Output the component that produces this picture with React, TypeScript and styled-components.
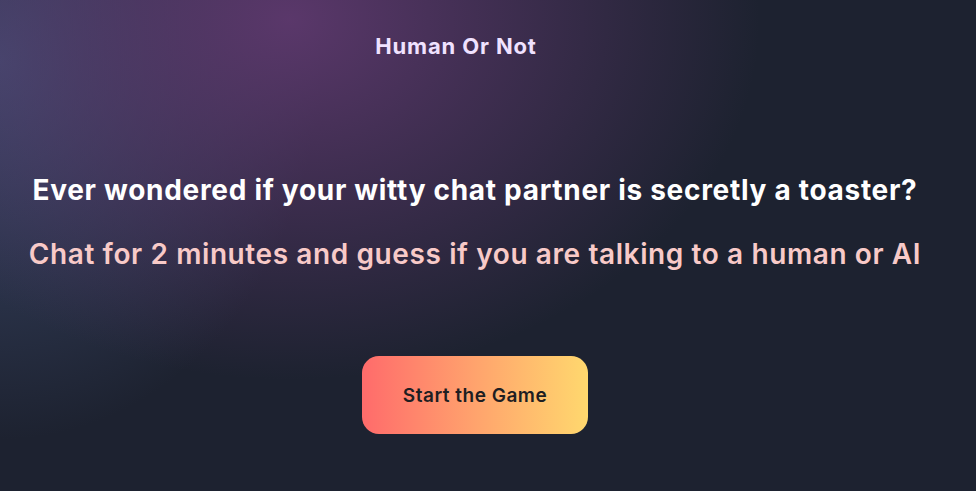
import React from "react";
import styled, { createGlobalStyle } from "styled-components";

const GlobalStyle = createGlobalStyle`
	html, body {
		margin: 0;
		padding: 0;
		height: 100%;
		background: #1d2230;
	}
	#root {
		min-height: 100%;
	}
`;

const Page = styled.main`
	box-sizing: border-box;
	min-height: 100vh;
	padding: 0 26px 0 0;
	font-family: Inter, "Open Sans", sans-serif;
	background:
		radial-gradient(ellipse 470px 360px at 290px 20px, rgba(92, 56, 108, 0.97), rgba(92, 56, 108, 0) 100%),
		radial-gradient(ellipse 320px 380px at 0px 60px, rgba(62, 76, 112, 0.95), rgba(62, 76, 112, 0) 100%),
		#1d2230;
	display: flex;
	flex-direction: column;
	align-items: center;
`;

const Header = styled.header`
	display: flex;
	justify-content: center;
	padding: 32px 38px 0 0;
`;

const Brand = styled.h1`
	margin: 0;
	font-size: 22px;
	font-weight: 700;
	letter-spacing: 0.85px;
	color: #f0e2ff;
	line-height: 28px;
`;

const Hero = styled.section`
	display: flex;
	flex-direction: column;
	align-items: center;
	padding-top: 112px;
	text-align: center;
`;

const Question = styled.h2<{ $tone?: "white" | "pink" }>`
	margin: 0;
	font-size: 28px;
	line-height: 36px;
	font-weight: ${(p) => (p.$tone === "pink" ? 600 : 700)};
	letter-spacing: ${(p) => (p.$tone === "pink" ? "0.6px" : "0.7px")};
	color: ${(p) => (p.$tone === "pink" ? "#f8cac8" : "#ffffff")};

	& + & {
		margin-top: 28px;
	}
`;

const StartButton = styled.button`
	margin-top: 84px;
	width: 226px;
	height: 78px;
	border: none;
	border-radius: 17px;
	background: linear-gradient(90deg, #ff6b6b 0%, #ffa36d 50%, #ffd86e 100%);
	color: #1e1e22;
	font-family: inherit;
	font-size: 19px;
	font-weight: 600;
	letter-spacing: 0.5px;
	cursor: pointer;
`;

export default function App() {
	return (
		<>
			<GlobalStyle />
			<Page>
				<Header>
					<Brand>Human Or Not</Brand>
				</Header>
				<Hero>
					<Question>Ever wondered if your witty chat partner is secretly a toaster?</Question>
					<Question $tone="pink">Chat for 2 minutes and guess if you are talking to a human or AI</Question>
					<StartButton>Start the Game</StartButton>
				</Hero>
			</Page>
		</>
	);
}
